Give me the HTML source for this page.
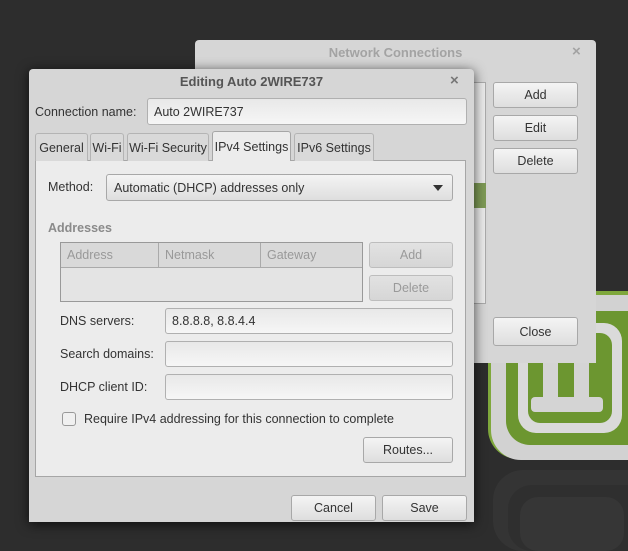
<!DOCTYPE html>
<html><head><style>
*{box-sizing:border-box}
html,body{overflow:hidden}
body{margin:0;width:628px;height:551px;background:#2d2d2d;font-family:"Liberation Sans","DejaVu Sans",sans-serif;font-size:12.5px;color:#333;position:relative}
.abs{position:absolute}
.btn{position:absolute;border:1px solid #a8a8a8;border-radius:3px;background:linear-gradient(#f4f4f4,#dedede);text-align:center;color:#333;display:flex;align-items:center;justify-content:center}
.dis{color:#9a9a9a;background:linear-gradient(#e2e2e2,#d6d6d6);border-color:#bdbdbd}
.entry{position:absolute;border:1px solid #b0b0b0;border-radius:3px;background:linear-gradient(#e8e8e8,#f6f6f6);padding-left:6px;display:flex;align-items:center}
.lbl{position:absolute;line-height:14px}
.tab{position:absolute;top:133px;height:28px;border:1px solid #b4b4b4;border-bottom:none;border-radius:3px 3px 0 0;background:#d9d9d9;display:flex;align-items:center;justify-content:center}
</style></head><body>
<svg class="abs" style="left:0;top:0" width="628" height="551">
<rect x="488" y="291" width="170" height="168" rx="30" fill="#7fa83c"/>
<rect x="491" y="295" width="170" height="165" rx="30" fill="#d2d2d2"/>
<rect x="506" y="311" width="150" height="134" rx="24" fill="#6c9630"/>
<rect x="518" y="323" width="104" height="110" rx="18" fill="#dadada"/>
<rect x="528" y="333" width="84" height="90" rx="12" fill="#6c9630"/>
<rect x="531" y="397" width="72" height="15" rx="4" fill="#d4d4d4"/>
<rect x="543" y="330" width="15" height="75" fill="#d4d4d4"/>
<rect x="574" y="330" width="15" height="75" fill="#d4d4d4"/>
<rect x="493" y="470" width="170" height="81" rx="30" fill="#343434"/>
<rect x="508" y="485" width="150" height="66" rx="24" fill="#2f2f2f"/>
<rect x="520" y="497" width="104" height="54" rx="18" fill="#363636"/>
</svg>
<div class="abs" style="left:195px;top:40px;width:401px;height:323px;background:#d6d6d6;border-radius:4px 4px 0 0"></div>
<div class="abs" style="left:195px;top:45px;width:401px;text-align:center;font-weight:bold;color:#a3a3a3;font-size:13px">Network Connections</div>
<div class="abs" style="left:572px;top:43px;color:#a3a3a3;font-size:15px;font-weight:bold">×</div>
<div class="abs" style="left:470px;top:82px;width:16px;height:222px;background:#ececec;border:1px solid #aaa"></div>
<div class="abs" style="left:471px;top:183px;width:15px;height:25px;background:#7e9a56"></div>
<div class="btn" style="left:493px;top:82px;width:85px;height:26px">Add</div>
<div class="btn" style="left:493px;top:115px;width:85px;height:26px">Edit</div>
<div class="btn" style="left:493px;top:148px;width:85px;height:26px">Delete</div>
<div class="btn" style="left:493px;top:317px;width:85px;height:29px">Close</div>

<div class="abs" style="left:29px;top:69px;width:445px;height:453px;background:#d6d6d6;border-radius:4px 4px 0 0;box-shadow:0 2px 12px rgba(0,0,0,.7)"></div>
<div class="abs" style="left:29px;top:74px;width:445px;text-align:center;font-weight:bold;color:#555;font-size:13px">Editing Auto 2WIRE737</div>
<div class="abs" style="left:450px;top:72px;color:#777;font-size:15px;font-weight:bold">×</div>
<div class="lbl" style="left:35px;top:105px">Connection name:</div>
<div class="entry" style="left:147px;top:98px;width:320px;height:27px">Auto 2WIRE737</div>
<div class="abs" style="left:35px;top:160px;width:431px;height:317px;background:#ececec;border:1px solid #a6a6a6"></div>
<div class="tab" style="left:35px;width:53px">General</div>
<div class="tab" style="left:90px;width:34px">Wi-Fi</div>
<div class="tab" style="left:127px;width:82px">Wi-Fi Security</div>
<div class="tab" style="left:212px;top:131px;height:30px;width:79px;background:#ececec;border-color:#a6a6a6">IPv4 Settings</div>
<div class="tab" style="left:294px;width:80px">IPv6 Settings</div>
<div class="lbl" style="left:48px;top:180px">Method:</div>
<div class="btn" style="left:106px;top:174px;width:347px;height:27px;justify-content:flex-start;padding-left:7px">Automatic (DHCP) addresses only<span style="position:absolute;right:9px;top:10px;border-left:5px solid transparent;border-right:5px solid transparent;border-top:6px solid #333"></span></div>
<div class="lbl" style="left:48px;top:221px;font-weight:bold;color:#8a8a8a">Addresses</div>
<div class="abs" style="left:60px;top:242px;width:303px;height:60px;border:1px solid #999;background:#e4e4e4"></div>
<div class="abs" style="left:61px;top:243px;width:301px;height:25px;background:#d9d9d9;border-bottom:1px solid #aaa;color:#999;display:flex;align-items:center">
<span style="width:98px;padding-left:6px;border-right:1px solid #aaa;height:100%;display:flex;align-items:center">Address</span><span style="width:102px;padding-left:6px;border-right:1px solid #aaa;height:100%;display:flex;align-items:center">Netmask</span><span style="padding-left:6px">Gateway</span></div>
<div class="btn dis" style="left:369px;top:242px;width:84px;height:26px">Add</div>
<div class="btn dis" style="left:369px;top:275px;width:84px;height:26px">Delete</div>
<div class="lbl" style="left:60px;top:314px">DNS servers:</div>
<div class="entry" style="left:165px;top:308px;width:288px;height:26px">8.8.8.8, 8.8.4.4</div>
<div class="lbl" style="left:60px;top:347px">Search domains:</div>
<div class="entry" style="left:165px;top:341px;width:288px;height:26px"></div>
<div class="lbl" style="left:60px;top:380px">DHCP client ID:</div>
<div class="entry" style="left:165px;top:374px;width:288px;height:26px"></div>
<div class="abs" style="left:62px;top:412px;width:14px;height:14px;border:1px solid #999;border-radius:3px;background:#f0f0f0"></div>
<div class="lbl" style="left:84px;top:412px">Require IPv4 addressing for this connection to complete</div>
<div class="btn" style="left:363px;top:437px;width:90px;height:26px">Routes...</div>
<div class="btn" style="left:291px;top:495px;width:85px;height:26px">Cancel</div>
<div class="btn" style="left:382px;top:495px;width:85px;height:26px">Save</div>
</body></html>
